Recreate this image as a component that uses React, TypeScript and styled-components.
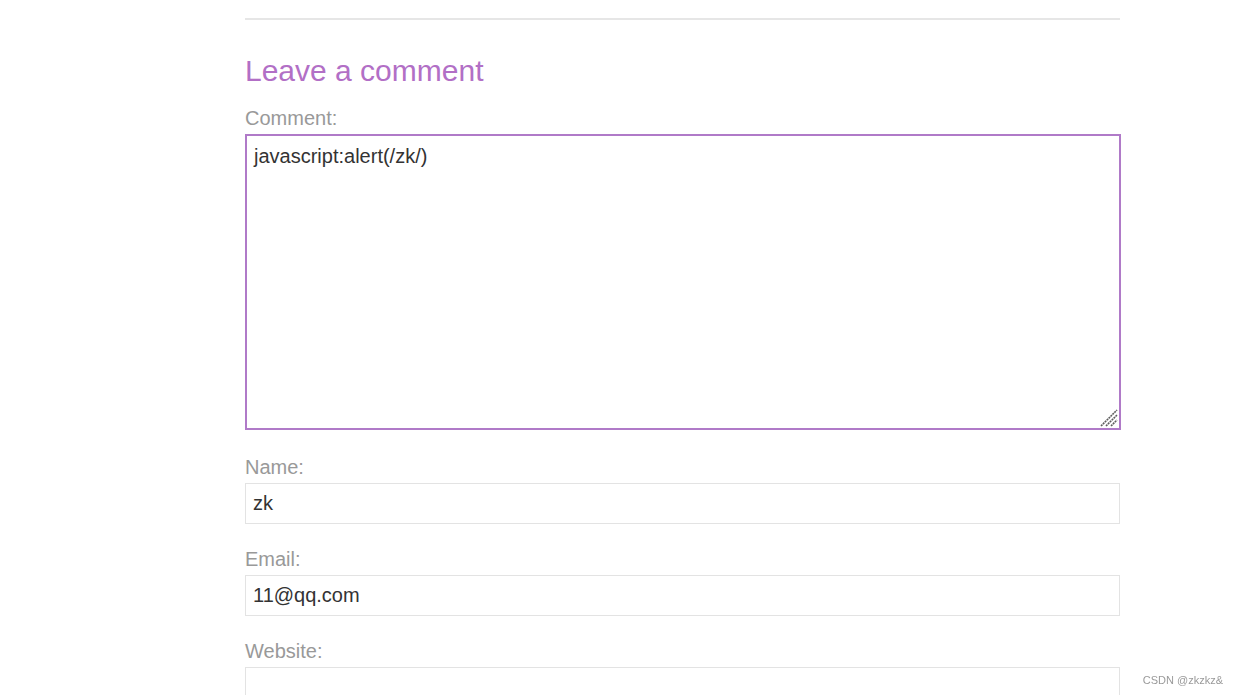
import React from "react";
import styled, { createGlobalStyle } from "styled-components";

const GlobalStyle = createGlobalStyle`
  html, body {
    margin: 0;
    padding: 0;
    overflow: hidden;
    background: #ffffff;
    font-family: "Liberation Sans", Arial, sans-serif;
  }
`;

const Page = styled.div`
  width: 1238px;
  height: 695px;
  overflow: hidden;
  background: #fff;
`;

const Column = styled.div`
  width: 875px;
  margin-left: 245px;
  padding-top: 18px;
`;

const Divider = styled.hr`
  margin: 0;
  border: none;
  height: 2px;
  background: #e6e6e6;
`;

const Heading = styled.h1`
  margin: 34px 0 0;
  font-size: 30px;
  line-height: 34px;
  font-weight: 400;
  color: #b26fc6;
`;

const Form = styled.form`
  display: flex;
  flex-direction: column;
  margin-top: 19px;
`;

const Label = styled.label`
  display: block;
  font-size: 20px;
  line-height: 23px;
  color: #999999;
  margin-bottom: 4px;
`;

const Field = styled.div<{ $gap: number }>`
  display: flex;
  flex-direction: column;
  margin-bottom: ${(p) => p.$gap}px;
`;

const AreaWrap = styled.div`
  position: relative;
  width: 876px;
`;

const TextArea = styled.textarea`
  display: block;
  box-sizing: border-box;
  width: 876px;
  height: 296px;
  margin: 0;
  padding: 9px 7px;
  border: 2px solid #b07ac8;
  outline: none;
  resize: none;
  font-family: "Liberation Sans", Arial, sans-serif;
  font-size: 20px;
  line-height: 23px;
  color: #333333;
  background: #fff;
`;

const Grip = styled.svg`
  position: absolute;
  right: 3px;
  bottom: 3px;
  width: 18px;
  height: 18px;
  pointer-events: none;
`;

const Input = styled.input`
  display: block;
  box-sizing: border-box;
  width: 875px;
  height: 41px;
  margin: 0;
  padding: 8px 7px;
  border: 1px solid #e3e3e3;
  outline: none;
  font-family: "Liberation Sans", Arial, sans-serif;
  font-size: 20px;
  line-height: 23px;
  color: #333333;
  background: #fff;
`;

const Watermark = styled.div`
  position: fixed;
  right: 15px;
  bottom: 8px;
  font-family: "Liberation Sans", Arial, sans-serif;
  font-size: 11px;
  line-height: 13px;
  color: #9a9a9a;
`;

export default function App() {
  return (
    <Page>
      <GlobalStyle />
      <Column>
        <Divider />
        <Heading>Leave a comment</Heading>
        <Form onSubmit={(e) => e.preventDefault()}>
          <Field $gap={26}>
            <Label htmlFor="comment">Comment:</Label>
            <AreaWrap>
              <TextArea id="comment" defaultValue="javascript:alert(/zk/)" />
              <Grip viewBox="0 0 18 18">
                <g stroke="#5f5f5f" strokeWidth="1.6" strokeDasharray="2 0.7">
                  <line x1="1" y1="17" x2="17" y2="1" />
                  <line x1="6" y1="17" x2="17" y2="6" />
                  <line x1="11" y1="17" x2="17" y2="11" />
                </g>
              </Grip>
            </AreaWrap>
          </Field>
          <Field $gap={24}>
            <Label htmlFor="name">Name:</Label>
            <Input id="name" defaultValue="zk" />
          </Field>
          <Field $gap={24}>
            <Label htmlFor="email">Email:</Label>
            <Input id="email" defaultValue="11@qq.com" />
          </Field>
          <Field $gap={24}>
            <Label htmlFor="website">Website:</Label>
            <Input id="website" defaultValue="" />
          </Field>
        </Form>
      </Column>
      <Watermark>CSDN @zkzkz&amp;</Watermark>
    </Page>
  );
}
